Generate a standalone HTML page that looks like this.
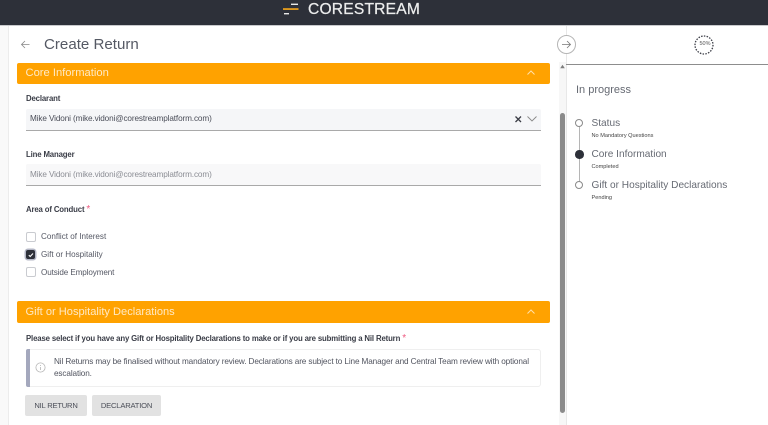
<!DOCTYPE html>
<html lang="en">
<head>
<meta charset="utf-8">
<title>Create Return</title>
<style>
html,body{margin:0;padding:0;width:768px;height:425px;overflow:hidden;background:#fff;font-family:"Liberation Sans",sans-serif}
.a{position:absolute;white-space:nowrap;line-height:1}
.box{position:absolute}
.t{filter:blur(.3px)}
.lbl{font-size:7.8px;font-weight:bold;color:#3a3d47;letter-spacing:-.15px}
.val{font-size:8.2px;color:#4a4d58;letter-spacing:-.12px}
.opt{font-size:8.1px;color:#555864}
.cb{position:absolute;left:26px;width:8px;height:8px;border:1px solid #c9cbd0;border-radius:2px;background:#fff}
.dot{position:absolute;left:575px;width:6px;height:6px;border:1.3px solid #8a8a8a;border-radius:50%;background:#fff}
.st{font-size:10.1px;color:#666a73}
.sub{font-size:5.6px;color:#444}
.btn{position:absolute;top:395px;height:21px;background:#e2e2e2;border-radius:2px;color:#4b4e58;font-size:7.6px;line-height:21px;text-align:center;letter-spacing:-.2px}
</style>
</head>
<body>
<div class="box" style="left:0;top:0;width:768px;height:25px;background:#2d3039"></div>
<div class="box" style="left:0;top:25px;width:768px;height:1px;background:#c9cacd"></div>
<div class="box" style="left:0;top:26px;width:8px;height:399px;background:#f9f9f9"></div>
<div class="box" style="left:8px;top:26px;width:1px;height:399px;background:#ececec"></div>

<svg class="box" style="left:282px;top:2px" width="20" height="14" viewBox="0 0 20 14">
<rect x="9" y="1.6" width="7" height="1.4" fill="#e8e8e8"/>
<rect x="1" y="6.2" width="15.5" height="1.7" fill="#f0a31c"/>
<rect x="2" y="11" width="5" height="1.4" fill="#e8e8e8"/>
</svg>
<div class="a" style="left:308px;top:2px;font-size:15.600px;color:#eceded;letter-spacing:.2px;-webkit-text-stroke:.25px #eceded">CORESTREAM</div>

<svg class="box" style="left:20px;top:39px" width="11" height="11" viewBox="0 0 11 11" fill="none" stroke="#888" stroke-width=".8"><path d="M9.500 5.500H1.500M5 2L1.500 5.500L5 9"/></svg>
<div class="a t" style="left:44px;top:37px;font-size:15.100px;color:#555964">Create Return</div>

<div class="box" style="left:17px;top:63px;width:533px;height:21px;background:#ffa200;border-radius:2px"></div>
<div class="a t" style="left:25.500px;top:67.500px;font-size:11.200px;color:#ffe9c4">Core Information</div>
<svg class="box" style="left:526px;top:69px" width="10" height="7" viewBox="0 0 10 7" fill="none" stroke="#ffdfa8" stroke-width="1"><path d="M1.500 5.500L5 2L8.500 5.500"/></svg>

<div class="a t lbl" style="left:26px;top:95px">Declarant</div>
<div class="box" style="left:26px;top:109px;width:515px;height:21px;background:#f5f6f8;border-bottom:1px solid #a9a9a9;border-radius:2px 2px 0 0"></div>
<div class="a t val" style="left:30px;top:115px">Mike Vidoni (mike.vidoni@corestreamplatform.com)</div>
<svg class="box" style="left:514px;top:115px" width="9" height="9" viewBox="0 0 9 9" fill="none" stroke="#3b3d46" stroke-width="1.300"><path d="M1.500 1.500L7 7M7 1.500L1.500 7"/></svg>
<svg class="box" style="left:526px;top:115px" width="12" height="8" viewBox="0 0 12 8" fill="none" stroke="#888" stroke-width=".9"><path d="M1.500 1.500L6 6L10.500 1.500"/></svg>

<div class="a t lbl" style="left:26px;top:151px">Line Manager</div>
<div class="box" style="left:26px;top:164px;width:515px;height:21px;background:#f8f8f9;border-bottom:1px solid #a9a9a9;border-radius:2px 2px 0 0"></div>
<div class="a t val" style="left:30px;top:171px;color:#8b8d94">Mike Vidoni (mike.vidoni@corestreamplatform.com)</div>

<div class="a t lbl" style="left:26px;top:205px">Area of Conduct <span style="color:#ee5a80;font-weight:normal;font-size:10px">*</span></div>

<div class="cb" style="top:232px"></div>
<div class="a t opt" style="left:41px;top:233px">Conflict of Interest</div>
<div class="box" style="left:26px;top:250px;width:9px;height:9px;background:#2d3039;border-radius:2px;box-shadow:0 0 0 1.500px #b4b7c6"></div>
<svg class="box" style="left:26px;top:250px" width="10" height="10" viewBox="0 0 10 10" fill="none" stroke="#fff" stroke-width="1.100"><path d="M2.800 5.200L4.200 6.500L7 3.500"/></svg>
<div class="a t opt" style="left:41px;top:251px">Gift or Hospitality</div>
<div class="cb" style="top:267px"></div>
<div class="a t opt" style="left:41px;top:268.500px;letter-spacing:-.1px">Outside Employment</div>

<div class="box" style="left:17px;top:301px;width:533px;height:22px;background:#ffa200;border-radius:2px"></div>
<div class="a t" style="left:25.500px;top:306.500px;font-size:11.100px;color:#ffe9c4">Gift or Hospitality Declarations</div>
<svg class="box" style="left:526px;top:308px" width="10" height="7" viewBox="0 0 10 7" fill="none" stroke="#ffdfa8" stroke-width="1"><path d="M1.500 5.500L5 2L8.500 5.500"/></svg>

<div class="a t lbl" style="left:26px;top:334px">Please select if you have any Gift or Hospitality Declarations to make or if you are submitting a Nil Return <span style="color:#ee5a80;font-weight:normal;font-size:10px">*</span></div>

<div class="box" style="left:26px;top:349px;width:513px;height:36px;border:1px solid #efefef;border-radius:3px;background:#fff"></div>
<div class="box" style="left:26px;top:349px;width:4px;height:37.500px;background:#a4a8bd;border-radius:2px 0 0 2px"></div>
<svg class="box" style="left:35px;top:362px" width="11" height="11" viewBox="0 0 11 11" fill="none" stroke="#b5b5b5" stroke-width=".8"><circle cx="5.500" cy="5.500" r="4.600"/><path d="M5.500 5V8M5.500 3V4"/></svg>
<div class="a t val" style="left:54px;top:358px;color:#51545f">Nil Returns may be finalised without mandatory review. Declarations are subject to Line Manager and Central Team review with optional</div>
<div class="a t val" style="left:54px;top:369.500px;color:#51545f">escalation.</div>

<div class="btn t" style="left:25px;width:62px">NIL RETURN</div>
<div class="btn t" style="left:92px;width:69px">DECLARATION</div>

<div class="box" style="left:559px;top:62px;width:7px;height:363px;background:#f7f7f7"></div>
<div class="box" style="left:566px;top:26px;width:1px;height:399px;background:#e8e8e8"></div>
<div class="box" style="left:560px;top:113px;width:5px;height:300px;background:#8b8b8b;border-radius:2.500px"></div>
<svg class="box" style="left:560px;top:64px" width="5" height="5" viewBox="0 0 5 5"><path d="M2.500 .8L4.800 4.200H.2Z" fill="#7d7d7d"/></svg>
<div class="box" style="left:566px;top:64px;width:202px;height:1px;background:#8d8d8d"></div>

<div class="box" style="left:557px;top:35px;width:17px;height:17px;border:1px solid #b5b5b5;border-radius:50%;background:#fff"></div>
<svg class="box" style="left:560px;top:38px" width="13" height="13" viewBox="0 0 13 13" fill="none" stroke="#777" stroke-width=".8"><path d="M2 6.500H10.500M7 3L10.500 6.500L7 10"/></svg>

<svg class="box" style="left:693px;top:34px" width="22" height="22" viewBox="0 0 22 22" fill="none"><circle cx="11" cy="11" r="9" stroke="#3b3d46" stroke-width="1.300" stroke-dasharray="1.500 1.300"/></svg>
<div class="a t" style="left:699.500px;top:42px;font-size:5.500px;color:#555">50%</div>

<div class="a t" style="left:576px;top:85px;font-size:11px;color:#666a73">In progress</div>

<div class="box" style="left:578.500px;top:125px;width:1.500px;height:60px;background:#b5b5b5"></div>
<div class="dot" style="top:119px"></div>
<div class="box" style="left:575px;top:150px;width:8.500px;height:8.500px;border-radius:50%;background:#2d3039"></div>
<div class="dot" style="top:181px"></div>

<div class="a t st" style="left:591.500px;top:119px">Status</div>
<div class="a t sub" style="left:591.500px;top:133.500px">No Mandatory Questions</div>
<div class="a t st" style="left:591.500px;top:150px">Core Information</div>
<div class="a t sub" style="left:591.500px;top:165px">Completed</div>
<div class="a t st" style="left:591.500px;top:181px">Gift or Hospitality Declarations</div>
<div class="a t sub" style="left:591.500px;top:196px">Pending</div>
</body>
</html>
